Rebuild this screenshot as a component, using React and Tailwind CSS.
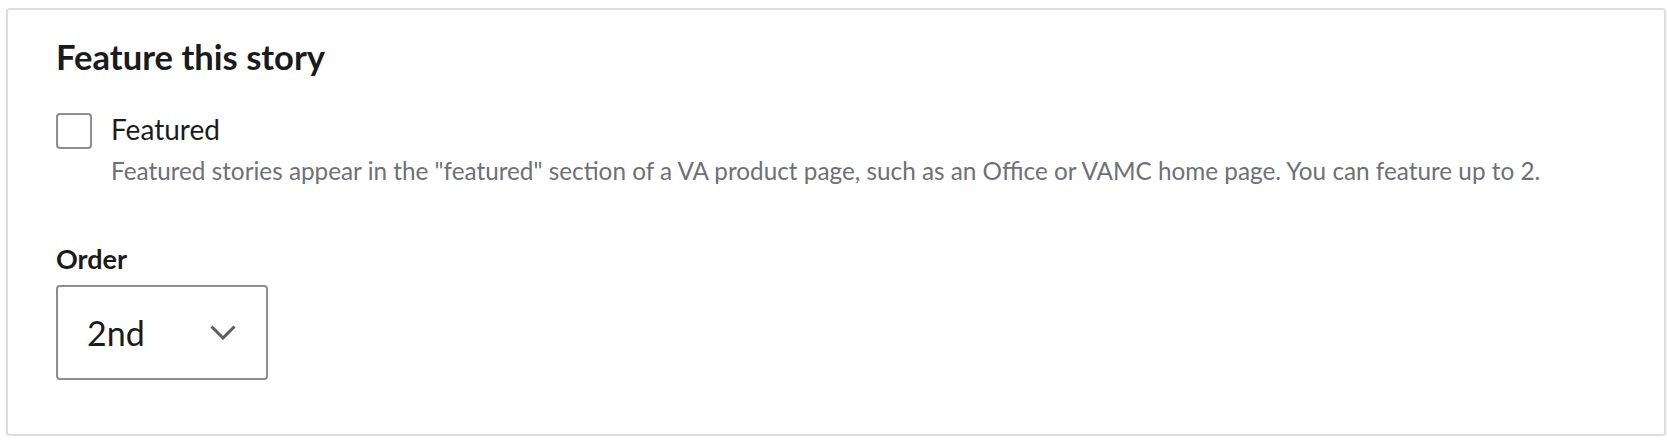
import { useState } from "react";

export default function App() {
  const [featured, setFeatured] = useState(false);

  return (
    <div className="pt-[8px] pl-[6px] bg-white font-['Lato',sans-serif] text-[#1b1b1b]">
      {/* CARD */}
      <div className="w-[1660px] h-[428px] border-2 border-[#dcdde0] rounded-[4px] shadow-[0_2px_3px_rgba(0,0,0,0.07)] bg-white pl-[48px] pt-[25px]">
        <h2 className="text-[34.6px] leading-[44px] font-bold">Feature this story</h2>

        {/* Featured checkbox */}
        <div className="mt-[32px] flex">
          <button
            type="button"
            onClick={() => setFeatured(!featured)}
            className="w-[36px] h-[36px] mt-[2px] shrink-0 border-2 border-[#8d8e92] rounded-[4px] bg-white"
          />
          <div className="ml-[19px]">
            <div className="text-[28px] leading-[36px]">Featured</div>
            <p className="mt-[8px] text-[24.3px] leading-[32px] text-[#6f7075]">
              Featured stories appear in the "featured" section of a VA product page, such as an Office or VAMC home page. You can feature up to 2.
            </p>
          </div>
        </div>

        {/* Order select */}
        <div className="mt-[56px] text-[27px] leading-[32px] font-bold">Order</div>
        <div className="mt-[10px] w-[212px] h-[95px] border-2 border-[#8d8e92] rounded-[4px] flex items-center justify-between pl-[29px] pr-[30px]">
          <span className="text-[34px] leading-none">2nd</span>
          <svg width="26" height="15" viewBox="0 0 26 15" fill="none">
            <path d="M1.5 1.5 L13 13 L24.5 1.5" stroke="#5c5d62" strokeWidth="3" />
          </svg>
        </div>
      </div>
    </div>
  );
}
